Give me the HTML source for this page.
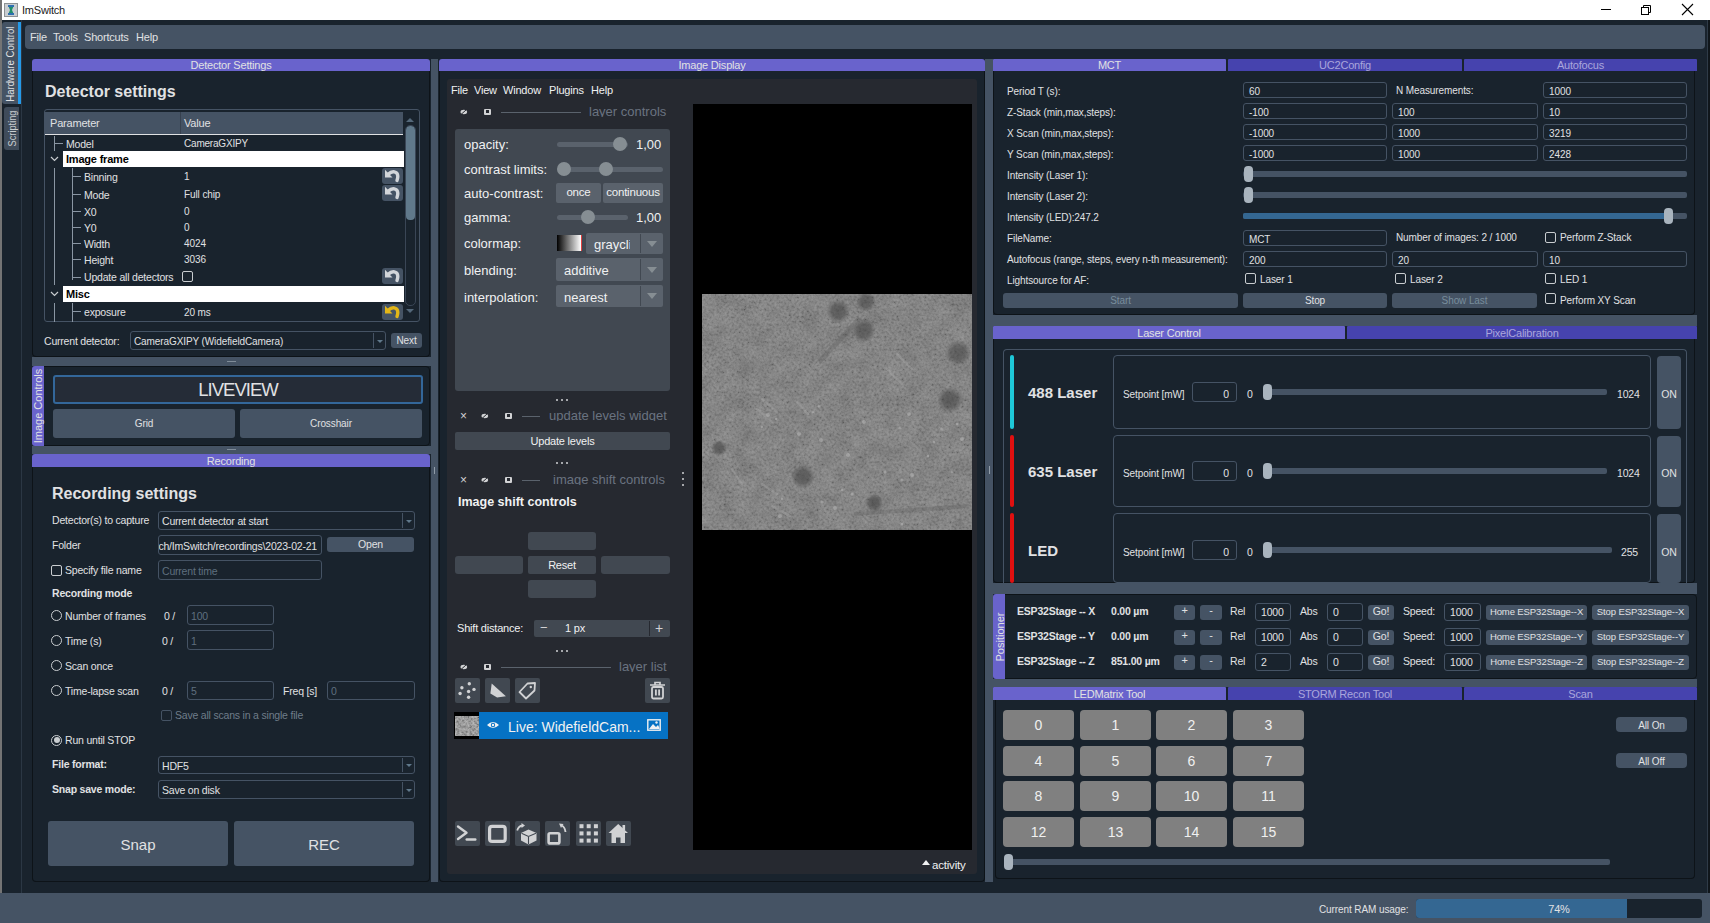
<!DOCTYPE html>
<html><head><meta charset="utf-8"><title>ImSwitch</title>
<style>
html,body{margin:0;padding:0;}
body{width:1710px;height:923px;overflow:hidden;position:relative;background:#19232D;font-family:"Liberation Sans",sans-serif;}
.a{position:absolute;}
.t{position:absolute;white-space:pre;}
</style></head><body>
<div class="a" style="left:0px;top:0px;width:1710px;height:20px;background:#FFFFFF;"></div>
<div class="a" style="left:0px;top:0px;width:2px;height:923px;background:#747474;"></div>
<div class="a" style="left:4px;top:3px;width:14px;height:14px;background:#c9cdd0;border:1px solid #8d9295;box-sizing:border-box;"></div>
<svg class="a" style="left:4px;top:3px;" width="14" height="14" viewBox="0 0 14 14"><path d="M4 2 L10 2 L8 7 L10 12 L4 12 L6 7 Z" fill="#1f8f6a"/><rect x="4" y="2" width="6" height="2" fill="#2e6fb0"/><rect x="4" y="10" width="6" height="2" fill="#2e6fb0"/></svg>
<div class="t" style="left:22px;top:4.69px;font-size:11px;line-height:11px;color:#1a1a1a;font-weight:400;letter-spacing:-0.2px;">ImSwitch</div>
<div class="a" style="left:1601px;top:9px;width:10px;height:1px;background:#000;"></div>
<svg class="a" style="left:1640px;top:4px;" width="12" height="12" viewBox="0 0 12 12"><rect x="1.5" y="3.5" width="7" height="7" fill="none" stroke="#000"/><path d="M3.5 3.5 V1.5 H10.5 V8.5 H8.5" fill="none" stroke="#000"/></svg>
<svg class="a" style="left:1681px;top:3px;" width="13" height="13" viewBox="0 0 13 13"><path d="M1 1 L12 12 M12 1 L1 12" stroke="#000" stroke-width="1.1"/></svg>
<div class="a" style="left:21px;top:20px;width:1px;height:873px;background:#2b3744;"></div>
<div class="a" style="left:2px;top:22px;width:16px;height:82px;background:#455364;border-radius:3px 0 0 3px;"></div>
<div class="a" style="left:18px;top:22px;width:3px;height:82px;background:#259AE9;"></div>
<div class="t" style="left:-31.0px;top:57.5px;width:82.0px;height:16px;line-height:16px;text-align:center;font-size:11px;color:#E0E1E3;transform:rotate(-90deg) scaleX(0.87);">Hardware Control</div>
<div class="a" style="left:4px;top:107px;width:15px;height:43px;background:#3f4b5a;border-radius:3px 0 0 3px;"></div>
<div class="t" style="left:-9.0px;top:121.0px;width:43px;height:15px;line-height:15px;text-align:center;font-size:11px;color:#C9CDD0;transform:rotate(-90deg) scaleX(0.84);">Scripting</div>
<div class="a" style="left:25px;top:25px;width:1680px;height:24px;background:#455364;border-radius:4px;"></div>
<div class="t" style="left:30px;top:31.69px;font-size:11px;line-height:11px;color:#E0E1E3;font-weight:400;letter-spacing:-0.2px;">File</div>
<div class="t" style="left:53px;top:31.69px;font-size:11px;line-height:11px;color:#E0E1E3;font-weight:400;letter-spacing:-0.2px;">Tools</div>
<div class="t" style="left:84px;top:31.69px;font-size:11px;line-height:11px;color:#E0E1E3;font-weight:400;letter-spacing:-0.2px;">Shortcuts</div>
<div class="t" style="left:136px;top:31.69px;font-size:11px;line-height:11px;color:#E0E1E3;font-weight:400;letter-spacing:-0.2px;">Help</div>
<div class="a" style="left:431px;top:59px;width:7px;height:823px;background:#455364;"></div>
<div class="a" style="left:985px;top:59px;width:8px;height:823px;background:#455364;"></div>
<div class="a" style="left:1707px;top:20px;width:1px;height:873px;background:#2f3b48;"></div>
<div class="a" style="left:1708px;top:20px;width:2px;height:873px;background:#10161b;"></div>
<div class="a" style="left:32px;top:357px;width:406px;height:9px;background:#455364;"></div>
<div class="a" style="left:32px;top:446px;width:406px;height:8px;background:#455364;"></div>
<div class="a" style="left:227px;top:361px;width:9px;height:1px;background:#7f8c99;"></div>
<div class="a" style="left:227px;top:449px;width:9px;height:1px;background:#7f8c99;"></div>
<div class="a" style="left:434px;top:467px;width:1px;height:7px;background:#8f9ba7;"></div>
<div class="a" style="left:988.5px;top:466px;width:1.0px;height:8px;background:#8f9ba7;"></div>
<div class="a" style="left:1341px;top:321px;width:8px;height:1px;background:#8f9ba7;"></div>
<div class="a" style="left:1341px;top:589px;width:8px;height:1px;background:#8f9ba7;"></div>
<div class="a" style="left:1341px;top:683px;width:8px;height:1px;background:#8f9ba7;"></div>
<div class="a" style="left:993px;top:315px;width:704px;height:11px;background:#455364;"></div>
<div class="a" style="left:993px;top:583px;width:704px;height:11px;background:#455364;"></div>
<div class="a" style="left:993px;top:679px;width:704px;height:8px;background:#455364;"></div>
<div class="a" style="left:0px;top:893px;width:1710px;height:30px;background:#455364;"></div>
<div class="t" style="left:1319px;top:904.53px;font-size:10px;line-height:10px;color:#E0E1E3;font-weight:400;letter-spacing:-0.1px;">Current RAM usage:</div>
<div class="a" style="left:1416px;top:899px;width:286px;height:19px;background:#19232D;border-radius:3px;"></div>
<div class="a" style="left:1416px;top:899px;width:211px;height:19px;background:#346792;border-radius:3px 0 0 3px;"></div>
<div class="t" style="left:1416px;width:286px;text-align:center;top:903.69px;font-size:11px;line-height:11px;color:#E0E1E3;font-weight:400;letter-spacing:-0.2px;">74%</div>
<div class="a" style="left:32px;top:59px;width:398px;height:12px;background:#6963CC;border-radius:3px 3px 0 0;"></div>
<div class="t" style="left:32px;width:398px;text-align:center;top:59.69px;font-size:11px;line-height:11px;color:#E0E1E3;font-weight:400;letter-spacing:-0.2px;">Detector Settings</div>
<div class="a" style="left:32px;top:71px;width:398px;height:286px;background:#19232D;border:1px solid #0d1318;border-top:none;box-sizing:border-box;border-radius:0 0 4px 4px;"></div>
<div class="t" style="left:45px;top:83.76px;font-size:16px;line-height:16px;color:#E0E1E3;font-weight:700;letter-spacing:0;">Detector settings</div>
<div class="a" style="left:44px;top:109px;width:376px;height:213px;border:1px solid #455364;border-radius:3px;box-sizing:border-box;"></div>
<div class="a" style="left:45px;top:112px;width:358px;height:22px;background:#455364;"></div>
<div class="a" style="left:45px;top:134px;width:358px;height:1px;background:#E0E1E3;"></div>
<div class="a" style="left:180px;top:112px;width:1px;height:22px;background:#37414F;"></div>
<div class="t" style="left:50px;top:117.69px;font-size:11px;line-height:11px;color:#E0E1E3;font-weight:400;letter-spacing:-0.2px;">Parameter</div>
<div class="t" style="left:184px;top:117.69px;font-size:11px;line-height:11px;color:#E0E1E3;font-weight:400;letter-spacing:-0.2px;">Value</div>
<div class="a" style="left:406px;top:126px;width:9px;height:94px;background:#60798B;border-radius:4px;"></div>
<div class="a" style="left:404.5px;top:125px;width:11.0px;height:181px;border:1px solid #3a4656;border-radius:5px;box-sizing:border-box;"></div>
<div class="a" style="left:405.5px;top:118px;width:0;height:0;border-left:4.5px solid transparent;border-right:4.5px solid transparent;border-bottom:4px solid #54687A;"></div>
<div class="a" style="left:406px;top:309px;width:0;height:0;border-left:4.5px solid transparent;border-right:4.5px solid transparent;border-top:4px solid #54687A;"></div>
<div class="a" style="left:54px;top:136px;width:1px;height:15px;background:#8a96a3;"></div>
<div class="a" style="left:55px;top:143px;width:8px;height:1px;background:#8a96a3;"></div>
<div class="a" style="left:54px;top:168px;width:1px;height:117px;background:#8a96a3;"></div>
<div class="a" style="left:54px;top:303px;width:1px;height:19px;background:#8a96a3;"></div>
<div class="a" style="left:72px;top:168px;width:1px;height:112px;background:#8a96a3;"></div>
<div class="a" style="left:73px;top:176px;width:8px;height:1px;background:#8a96a3;"></div>
<div class="a" style="left:73px;top:194px;width:8px;height:1px;background:#8a96a3;"></div>
<div class="a" style="left:73px;top:211px;width:8px;height:1px;background:#8a96a3;"></div>
<div class="a" style="left:73px;top:227px;width:8px;height:1px;background:#8a96a3;"></div>
<div class="a" style="left:73px;top:243px;width:8px;height:1px;background:#8a96a3;"></div>
<div class="a" style="left:73px;top:259px;width:8px;height:1px;background:#8a96a3;"></div>
<div class="a" style="left:73px;top:277px;width:8px;height:1px;background:#8a96a3;"></div>
<div class="a" style="left:72px;top:303px;width:1px;height:19px;background:#8a96a3;"></div>
<div class="a" style="left:73px;top:311px;width:8px;height:1px;background:#8a96a3;"></div>
<svg class="a" style="left:50px;top:156px;" width="9" height="6" viewBox="0 0 9 6"><path d="M1 1 L4.5 4.5 L8 1" fill="none" stroke="#C9CDD0" stroke-width="1.2"/></svg>
<svg class="a" style="left:50px;top:291px;" width="9" height="6" viewBox="0 0 9 6"><path d="M1 1 L4.5 4.5 L8 1" fill="none" stroke="#C9CDD0" stroke-width="1.2"/></svg>
<div class="t" style="left:66px;top:138.71px;font-size:10.5px;line-height:10.5px;color:#E0E1E3;font-weight:400;letter-spacing:-0.2px;">Model</div>
<div class="t" style="left:184px;top:138.29px;font-size:11px;line-height:11px;color:#E0E1E3;font-weight:400;letter-spacing:-0.2px;font-size:10px;">CameraGXIPY</div>
<div class="a" style="left:63px;top:151px;width:341px;height:16px;background:#FFFFFF;"></div>
<div class="t" style="left:66px;top:154.19px;font-size:11px;line-height:11px;color:#000;font-weight:700;letter-spacing:-0.2px;">Image frame</div>
<div class="t" style="left:84px;top:171.61px;font-size:10.5px;line-height:10.5px;color:#E0E1E3;font-weight:400;letter-spacing:-0.2px;">Binning</div>
<div class="t" style="left:184px;top:172.03px;font-size:10px;line-height:10px;color:#E0E1E3;font-weight:400;letter-spacing:-0.1px;">1</div>
<div class="t" style="left:84px;top:189.61px;font-size:10.5px;line-height:10.5px;color:#E0E1E3;font-weight:400;letter-spacing:-0.2px;">Mode</div>
<div class="t" style="left:184px;top:190.03px;font-size:10px;line-height:10px;color:#E0E1E3;font-weight:400;letter-spacing:-0.1px;">Full chip</div>
<div class="t" style="left:84px;top:206.61px;font-size:10.5px;line-height:10.5px;color:#E0E1E3;font-weight:400;letter-spacing:-0.2px;">X0</div>
<div class="t" style="left:184px;top:207.03px;font-size:10px;line-height:10px;color:#E0E1E3;font-weight:400;letter-spacing:-0.1px;">0</div>
<div class="t" style="left:84px;top:222.61px;font-size:10.5px;line-height:10.5px;color:#E0E1E3;font-weight:400;letter-spacing:-0.2px;">Y0</div>
<div class="t" style="left:184px;top:223.03px;font-size:10px;line-height:10px;color:#E0E1E3;font-weight:400;letter-spacing:-0.1px;">0</div>
<div class="t" style="left:84px;top:238.61px;font-size:10.5px;line-height:10.5px;color:#E0E1E3;font-weight:400;letter-spacing:-0.2px;">Width</div>
<div class="t" style="left:184px;top:239.03px;font-size:10px;line-height:10px;color:#E0E1E3;font-weight:400;letter-spacing:-0.1px;">4024</div>
<div class="t" style="left:84px;top:254.61px;font-size:10.5px;line-height:10.5px;color:#E0E1E3;font-weight:400;letter-spacing:-0.2px;">Height</div>
<div class="t" style="left:184px;top:255.03px;font-size:10px;line-height:10px;color:#E0E1E3;font-weight:400;letter-spacing:-0.1px;">3036</div>
<div class="t" style="left:84px;top:272.11px;font-size:10.5px;line-height:10.5px;color:#E0E1E3;font-weight:400;letter-spacing:-0.2px;">Update all detectors</div>
<div class="a" style="left:182px;top:271px;width:11px;height:11px;border:1px solid #C9CDD0;border-radius:2px;box-sizing:border-box;"></div>
<div class="a" style="left:63px;top:286px;width:341px;height:16px;background:#FFFFFF;"></div>
<div class="t" style="left:66px;top:289.19px;font-size:11px;line-height:11px;color:#000;font-weight:700;letter-spacing:-0.2px;">Misc</div>
<div class="t" style="left:84px;top:307.11px;font-size:10.5px;line-height:10.5px;color:#E0E1E3;font-weight:400;letter-spacing:-0.2px;">exposure</div>
<div class="t" style="left:184px;top:307.54px;font-size:10px;line-height:10px;color:#E0E1E3;font-weight:400;letter-spacing:-0.1px;">20 ms</div>
<div class="a" style="left:382px;top:168px;width:21px;height:16px;background:#455364;border-radius:3px;"></div>
<svg class="a" style="left:385px;top:169px;" width="16" height="14" viewBox="0 0 16 14"><path d="M3.5 5 C 7 1.5, 12.5 2, 12.8 7 C 12.9 8.5, 12.5 10, 12 11.5" fill="none" stroke="#d3d6da" stroke-width="3.4" stroke-linecap="round"/><path d="M0 0.8 L0 8.5 L7.5 8.5 Z" fill="#d3d6da"/></svg>
<div class="a" style="left:382px;top:184.5px;width:21px;height:16.0px;background:#455364;border-radius:3px;"></div>
<svg class="a" style="left:385px;top:185.5px;" width="16" height="14" viewBox="0 0 16 14"><path d="M3.5 5 C 7 1.5, 12.5 2, 12.8 7 C 12.9 8.5, 12.5 10, 12 11.5" fill="none" stroke="#d3d6da" stroke-width="3.4" stroke-linecap="round"/><path d="M0 0.8 L0 8.5 L7.5 8.5 Z" fill="#d3d6da"/></svg>
<div class="a" style="left:382px;top:268px;width:21px;height:16px;background:#455364;border-radius:3px;"></div>
<svg class="a" style="left:385px;top:269px;" width="16" height="14" viewBox="0 0 16 14"><path d="M3.5 5 C 7 1.5, 12.5 2, 12.8 7 C 12.9 8.5, 12.5 10, 12 11.5" fill="none" stroke="#d3d6da" stroke-width="3.4" stroke-linecap="round"/><path d="M0 0.8 L0 8.5 L7.5 8.5 Z" fill="#d3d6da"/></svg>
<div class="a" style="left:382px;top:303.5px;width:21px;height:16.0px;background:#455364;border-radius:3px;"></div>
<svg class="a" style="left:385px;top:304.5px;" width="16" height="14" viewBox="0 0 16 14"><path d="M3.5 5 C 7 1.5, 12.5 2, 12.8 7 C 12.9 8.5, 12.5 10, 12 11.5" fill="none" stroke="#e3b617" stroke-width="3.4" stroke-linecap="round"/><path d="M0 0.8 L0 8.5 L7.5 8.5 Z" fill="#e3b617"/></svg>
<div class="t" style="left:44px;top:335.69px;font-size:11px;line-height:11px;color:#E0E1E3;font-weight:400;letter-spacing:-0.2px;font-size:10.5px;">Current detector:</div>
<div class="a" style="left:130px;top:331px;width:256px;height:19px;background:#19232D;border:1px solid #455364;border-radius:3px;box-sizing:border-box;"></div>
<div class="a" style="left:131px;top:331px;width:250px;height:19px;overflow:hidden;direction:ltr;"><div class="t" style="left:0px;padding-left:3px;top:5.64px;font-size:10px;line-height:10px;color:#E0E1E3;letter-spacing:-0.1px;">CameraGXIPY (WidefieldCamera)</div></div>
<div class="a" style="left:373px;top:333px;width:1px;height:15px;background:#455364;"></div>
<div class="a" style="left:376.5px;top:339.5px;width:0;height:0;border-left:3px solid transparent;border-right:3px solid transparent;border-top:3px solid #60798B;"></div>
<div class="a" style="left:391px;top:333px;width:31px;height:15px;background:#455364;border-radius:3px;"></div>
<div class="t" style="left:391px;width:31px;text-align:center;top:335.64px;font-size:10px;line-height:10px;color:#E0E1E3;font-weight:400;letter-spacing:-0.1px;">Next</div>
<div class="a" style="left:32px;top:366px;width:398px;height:80px;background:#19232D;border:1px solid #0d1318;box-sizing:border-box;border-radius:4px;"></div>
<div class="a" style="left:32px;top:366px;width:12px;height:80px;background:#6963CC;border-radius:3px 0 0 3px;"></div>
<div class="t" style="left:-2.0px;top:400.0px;width:80px;height:12px;line-height:12px;text-align:center;font-size:11px;color:#E0E1E3;transform:rotate(-90deg) scaleX(1.0);">Image Controls</div>
<div class="a" style="left:53px;top:375px;width:370px;height:29px;background:#252c37;border:2px solid #33679a;border-radius:3px;box-sizing:border-box;"></div>
<div class="t" style="left:53px;width:370px;text-align:center;top:380.84px;font-size:18.5px;line-height:18.5px;color:#E0E1E3;font-weight:400;letter-spacing:0;letter-spacing:-1px;">LIVEVIEW</div>
<div class="a" style="left:53px;top:409px;width:182px;height:29px;background:#455364;border-radius:3px;"></div>
<div class="t" style="left:53px;width:182px;text-align:center;top:419.04px;font-size:10px;line-height:10px;color:#E0E1E3;font-weight:400;letter-spacing:-0.1px;">Grid</div>
<div class="a" style="left:240px;top:409px;width:182px;height:29px;background:#455364;border-radius:3px;"></div>
<div class="t" style="left:240px;width:182px;text-align:center;top:419.04px;font-size:10px;line-height:10px;color:#E0E1E3;font-weight:400;letter-spacing:-0.1px;">Crosshair</div>
<div class="a" style="left:32px;top:454px;width:398px;height:13px;background:#6963CC;border-radius:3px 3px 0 0;"></div>
<div class="t" style="left:32px;width:398px;text-align:center;top:455.69px;font-size:11px;line-height:11px;color:#E0E1E3;font-weight:400;letter-spacing:-0.2px;">Recording</div>
<div class="a" style="left:32px;top:467px;width:398px;height:415px;background:#19232D;border:1px solid #0d1318;border-top:none;box-sizing:border-box;border-radius:0 0 4px 4px;"></div>
<div class="t" style="left:52px;top:485.86px;font-size:16px;line-height:16px;color:#E0E1E3;font-weight:700;letter-spacing:0;">Recording settings</div>
<div class="t" style="left:52px;top:515.11px;font-size:10.5px;line-height:10.5px;color:#E0E1E3;font-weight:400;letter-spacing:-0.2px;">Detector(s) to capture</div>
<div class="a" style="left:158px;top:511px;width:257px;height:19px;background:#19232D;border:1px solid #455364;border-radius:3px;box-sizing:border-box;"></div>
<div class="a" style="left:159px;top:511px;width:251px;height:19px;overflow:hidden;direction:ltr;"><div class="t" style="left:0px;padding-left:3px;top:5.39px;font-size:10.5px;line-height:10.5px;color:#E0E1E3;letter-spacing:-0.2px;">Current detector at start</div></div>
<div class="a" style="left:402px;top:513px;width:1px;height:15px;background:#455364;"></div>
<div class="a" style="left:405.5px;top:519.5px;width:0;height:0;border-left:3px solid transparent;border-right:3px solid transparent;border-top:3px solid #60798B;"></div>
<div class="t" style="left:52px;top:539.61px;font-size:10.5px;line-height:10.5px;color:#E0E1E3;font-weight:400;letter-spacing:-0.2px;">Folder</div>
<div class="a" style="left:158px;top:535px;width:164px;height:20px;background:#19232D;border:1px solid #455364;border-radius:3px;box-sizing:border-box;"></div>
<div class="a" style="left:159px;top:535px;width:158px;height:20px;overflow:hidden;direction:ltr;"><div class="t" style="right:0px;padding-left:3px;top:5.89px;font-size:10.5px;line-height:10.5px;color:#E0E1E3;letter-spacing:-0.2px;">ch/ImSwitch/recordings\2023-02-21</div></div>
<div class="a" style="left:327px;top:537px;width:87px;height:15px;background:#455364;border-radius:3px;"></div>
<div class="t" style="left:327px;width:87px;text-align:center;top:539.39px;font-size:10.5px;line-height:10.5px;color:#E0E1E3;font-weight:400;letter-spacing:-0.2px;">Open</div>
<div class="a" style="left:51px;top:565px;width:11px;height:11px;border:1px solid #C9CDD0;border-radius:2px;box-sizing:border-box;"></div>
<div class="t" style="left:65px;top:564.61px;font-size:10.5px;line-height:10.5px;color:#E0E1E3;font-weight:400;letter-spacing:-0.2px;">Specify file name</div>
<div class="a" style="left:158px;top:560px;width:164px;height:20px;background:#19232D;border:1px solid #455364;border-radius:3px;box-sizing:border-box;"></div>
<div class="a" style="left:159px;top:560px;width:158px;height:20px;overflow:hidden;direction:ltr;"><div class="t" style="left:0px;padding-left:3px;top:5.89px;font-size:10.5px;line-height:10.5px;color:#5f6f7f;letter-spacing:-0.2px;">Current time</div></div>
<div class="t" style="left:52px;top:588.11px;font-size:10.5px;line-height:10.5px;color:#E0E1E3;font-weight:700;letter-spacing:-0.2px;">Recording mode</div>
<div class="a" style="left:51px;top:610px;width:11px;height:11px;border:1px solid #C9CDD0;border-radius:50%;box-sizing:border-box;"></div>
<div class="t" style="left:65px;top:611.11px;font-size:10.5px;line-height:10.5px;color:#E0E1E3;font-weight:400;letter-spacing:-0.2px;">Number of frames</div>
<div class="t" style="left:164px;top:611.11px;font-size:10.5px;line-height:10.5px;color:#E0E1E3;font-weight:400;letter-spacing:-0.2px;">0 /</div>
<div class="a" style="left:187px;top:605px;width:87px;height:20px;background:#19232D;border:1px solid #455364;border-radius:3px;box-sizing:border-box;"></div>
<div class="a" style="left:188px;top:605px;width:81px;height:20px;overflow:hidden;direction:ltr;"><div class="t" style="left:0px;padding-left:3px;top:5.89px;font-size:10.5px;line-height:10.5px;color:#5f6f7f;letter-spacing:-0.2px;">100</div></div>
<div class="a" style="left:51px;top:635px;width:11px;height:11px;border:1px solid #C9CDD0;border-radius:50%;box-sizing:border-box;"></div>
<div class="t" style="left:65px;top:636.11px;font-size:10.5px;line-height:10.5px;color:#E0E1E3;font-weight:400;letter-spacing:-0.2px;">Time (s)</div>
<div class="t" style="left:162px;top:636.11px;font-size:10.5px;line-height:10.5px;color:#E0E1E3;font-weight:400;letter-spacing:-0.2px;">0 /</div>
<div class="a" style="left:187px;top:630px;width:87px;height:20px;background:#19232D;border:1px solid #455364;border-radius:3px;box-sizing:border-box;"></div>
<div class="a" style="left:188px;top:630px;width:81px;height:20px;overflow:hidden;direction:ltr;"><div class="t" style="left:0px;padding-left:3px;top:5.89px;font-size:10.5px;line-height:10.5px;color:#5f6f7f;letter-spacing:-0.2px;">1</div></div>
<div class="a" style="left:51px;top:660px;width:11px;height:11px;border:1px solid #C9CDD0;border-radius:50%;box-sizing:border-box;"></div>
<div class="t" style="left:65px;top:660.61px;font-size:10.5px;line-height:10.5px;color:#E0E1E3;font-weight:400;letter-spacing:-0.2px;">Scan once</div>
<div class="a" style="left:51px;top:685px;width:11px;height:11px;border:1px solid #C9CDD0;border-radius:50%;box-sizing:border-box;"></div>
<div class="t" style="left:65px;top:685.61px;font-size:10.5px;line-height:10.5px;color:#E0E1E3;font-weight:400;letter-spacing:-0.2px;">Time-lapse scan</div>
<div class="t" style="left:162px;top:685.61px;font-size:10.5px;line-height:10.5px;color:#E0E1E3;font-weight:400;letter-spacing:-0.2px;">0 /</div>
<div class="a" style="left:187px;top:681px;width:87px;height:19px;background:#19232D;border:1px solid #455364;border-radius:3px;box-sizing:border-box;"></div>
<div class="a" style="left:188px;top:681px;width:81px;height:19px;overflow:hidden;direction:ltr;"><div class="t" style="left:0px;padding-left:3px;top:5.39px;font-size:10.5px;line-height:10.5px;color:#5f6f7f;letter-spacing:-0.2px;">5</div></div>
<div class="t" style="left:283px;top:685.61px;font-size:10.5px;line-height:10.5px;color:#E0E1E3;font-weight:400;letter-spacing:-0.2px;">Freq [s]</div>
<div class="a" style="left:327px;top:681px;width:88px;height:19px;background:#19232D;border:1px solid #455364;border-radius:3px;box-sizing:border-box;"></div>
<div class="a" style="left:328px;top:681px;width:82px;height:19px;overflow:hidden;direction:ltr;"><div class="t" style="left:0px;padding-left:3px;top:5.39px;font-size:10.5px;line-height:10.5px;color:#5f6f7f;letter-spacing:-0.2px;">0</div></div>
<div class="a" style="left:161px;top:710px;width:11px;height:11px;border:1px solid #455364;border-radius:2px;box-sizing:border-box;"></div>
<div class="t" style="left:175px;top:710.11px;font-size:10.5px;line-height:10.5px;color:#6f7d8a;font-weight:400;letter-spacing:-0.2px;">Save all scans in a single file</div>
<div class="a" style="left:51px;top:734.5px;width:11px;height:11.0px;border:1px solid #C9CDD0;border-radius:50%;box-sizing:border-box;"></div>
<div class="a" style="left:53.5px;top:737.0px;width:6.0px;height:6.0px;background:#C9CDD0;border-radius:50%;"></div>
<div class="t" style="left:65px;top:735.11px;font-size:10.5px;line-height:10.5px;color:#E0E1E3;font-weight:400;letter-spacing:-0.2px;">Run until STOP</div>
<div class="t" style="left:52px;top:759.11px;font-size:10.5px;line-height:10.5px;color:#E0E1E3;font-weight:700;letter-spacing:-0.2px;">File format:</div>
<div class="a" style="left:158px;top:756px;width:257px;height:18px;background:#19232D;border:1px solid #455364;border-radius:3px;box-sizing:border-box;"></div>
<div class="a" style="left:159px;top:756px;width:251px;height:18px;overflow:hidden;direction:ltr;"><div class="t" style="left:0px;padding-left:3px;top:4.89px;font-size:10.5px;line-height:10.5px;color:#E0E1E3;letter-spacing:-0.2px;">HDF5</div></div>
<div class="a" style="left:402px;top:758px;width:1px;height:14px;background:#455364;"></div>
<div class="a" style="left:405.5px;top:764.0px;width:0;height:0;border-left:3px solid transparent;border-right:3px solid transparent;border-top:3px solid #60798B;"></div>
<div class="t" style="left:52px;top:784.11px;font-size:10.5px;line-height:10.5px;color:#E0E1E3;font-weight:700;letter-spacing:-0.2px;">Snap save mode:</div>
<div class="a" style="left:158px;top:780px;width:257px;height:19px;background:#19232D;border:1px solid #455364;border-radius:3px;box-sizing:border-box;"></div>
<div class="a" style="left:159px;top:780px;width:251px;height:19px;overflow:hidden;direction:ltr;"><div class="t" style="left:0px;padding-left:3px;top:5.39px;font-size:10.5px;line-height:10.5px;color:#E0E1E3;letter-spacing:-0.2px;">Save on disk</div></div>
<div class="a" style="left:402px;top:782px;width:1px;height:15px;background:#455364;"></div>
<div class="a" style="left:405.5px;top:788.5px;width:0;height:0;border-left:3px solid transparent;border-right:3px solid transparent;border-top:3px solid #60798B;"></div>
<div class="a" style="left:48px;top:821px;width:180px;height:45px;background:#455364;border-radius:3px;"></div>
<div class="t" style="left:48px;width:180px;text-align:center;top:837.30px;font-size:15px;line-height:15px;color:#E0E1E3;font-weight:400;letter-spacing:0;">Snap</div>
<div class="a" style="left:234px;top:821px;width:180px;height:45px;background:#455364;border-radius:3px;"></div>
<div class="t" style="left:234px;width:180px;text-align:center;top:837.30px;font-size:15px;line-height:15px;color:#E0E1E3;font-weight:400;letter-spacing:0;">REC</div>
<div class="a" style="left:439px;top:59px;width:546px;height:12px;background:#6963CC;border-radius:3px 3px 0 0;"></div>
<div class="t" style="left:439px;width:546px;text-align:center;top:59.69px;font-size:11px;line-height:11px;color:#E0E1E3;font-weight:400;letter-spacing:-0.2px;">Image Display</div>
<div class="a" style="left:439px;top:71px;width:546px;height:811px;background:#19232D;border:1px solid #0d1318;border-top:none;box-sizing:border-box;border-radius:0 0 4px 4px;"></div>
<div class="a" style="left:447px;top:79px;width:530px;height:795px;background:#262930;border-radius:3px;"></div>
<div class="t" style="left:451px;top:84.69px;font-size:11px;line-height:11px;color:#F0F1F2;font-weight:400;letter-spacing:-0.2px;">File</div>
<div class="t" style="left:474px;top:84.69px;font-size:11px;line-height:11px;color:#F0F1F2;font-weight:400;letter-spacing:-0.2px;">View</div>
<div class="t" style="left:503px;top:84.69px;font-size:11px;line-height:11px;color:#F0F1F2;font-weight:400;letter-spacing:-0.2px;">Window</div>
<div class="t" style="left:549px;top:84.69px;font-size:11px;line-height:11px;color:#F0F1F2;font-weight:400;letter-spacing:-0.2px;">Plugins</div>
<div class="t" style="left:591px;top:84.69px;font-size:11px;line-height:11px;color:#F0F1F2;font-weight:400;letter-spacing:-0.2px;">Help</div>
<svg class="a" style="left:460px;top:109px;" width="8" height="6" viewBox="0 0 8 6"><ellipse cx="3.8" cy="3" rx="3.3" ry="2.2" fill="#D1D2D4"/><path d="M1 5.5 L6.5 0.5" stroke="#262930" stroke-width="1"/></svg>
<svg class="a" style="left:484px;top:109px;" width="8" height="7" viewBox="0 0 8 7"><rect x="0" y="0" width="7" height="6" rx="1" fill="#D1D2D4"/><rect x="2" y="1" width="3" height="3" fill="#262930"/></svg>
<div class="a" style="left:501px;top:112px;width:80px;height:1px;background:#5A626C;"></div>
<div class="a" style="left:589px;top:100px;width:120px;height:17px;overflow:hidden;"><div class="t" style="left:0;top:5.00px;font-size:13px;line-height:13px;color:#6A7380;">layer controls</div></div>
<div class="a" style="left:455px;top:129px;width:215px;height:262px;background:#414851;border-radius:3px;"></div>
<div class="t" style="left:464px;top:138.00px;font-size:13px;line-height:13px;color:#F0F1F2;font-weight:400;letter-spacing:0;">opacity:</div>
<div class="a" style="left:557px;top:141.5px;width:71px;height:5.0px;background:#5A626C;border-radius:3px;"></div>
<div class="a" style="left:613px;top:137px;width:14px;height:14px;background:#868E93;border-radius:50%;"></div>
<div class="t" style="left:636px;top:138.00px;font-size:13px;line-height:13px;color:#F0F1F2;font-weight:400;letter-spacing:0;">1,00</div>
<div class="t" style="left:464px;top:162.50px;font-size:13px;line-height:13px;color:#F0F1F2;font-weight:400;letter-spacing:0;">contrast limits:</div>
<div class="a" style="left:557px;top:166.5px;width:106px;height:5.0px;background:#5A626C;border-radius:3px;"></div>
<div class="a" style="left:557px;top:162px;width:14px;height:14px;background:#868E93;border-radius:50%;"></div>
<div class="a" style="left:599px;top:162px;width:14px;height:14px;background:#868E93;border-radius:50%;"></div>
<div class="t" style="left:464px;top:187.00px;font-size:13px;line-height:13px;color:#F0F1F2;font-weight:400;letter-spacing:0;">auto-contrast:</div>
<div class="a" style="left:556px;top:183px;width:45px;height:20px;background:#5A626C;border-radius:2px;"></div>
<div class="t" style="left:556px;width:45px;text-align:center;top:187.27px;font-size:11.5px;line-height:11.5px;color:#F0F1F2;font-weight:400;letter-spacing:-0.2px;">once</div>
<div class="a" style="left:603px;top:183px;width:60px;height:20px;background:#5A626C;border-radius:2px;"></div>
<div class="t" style="left:603px;width:60px;text-align:center;top:187.27px;font-size:11.5px;line-height:11.5px;color:#F0F1F2;font-weight:400;letter-spacing:-0.2px;">continuous</div>
<div class="t" style="left:464px;top:211.00px;font-size:13px;line-height:13px;color:#F0F1F2;font-weight:400;letter-spacing:0;">gamma:</div>
<div class="a" style="left:557px;top:214.5px;width:71px;height:5.0px;background:#5A626C;border-radius:3px;"></div>
<div class="a" style="left:581px;top:210px;width:14px;height:14px;background:#868E93;border-radius:50%;"></div>
<div class="t" style="left:636px;top:211.00px;font-size:13px;line-height:13px;color:#F0F1F2;font-weight:400;letter-spacing:0;">1,00</div>
<div class="t" style="left:464px;top:236.50px;font-size:13px;line-height:13px;color:#F0F1F2;font-weight:400;letter-spacing:0;">colormap:</div>
<div class="a" style="left:557px;top:235px;width:24px;height:16px;background:linear-gradient(90deg,#000,#fff);border-right:1px solid #e04040;"></div>
<div class="a" style="left:586px;top:233px;width:77px;height:21px;background:#5A626C;border-radius:2px;"></div>
<div class="a" style="left:640px;top:234px;width:1px;height:19px;background:#414851;"></div>
<div class="a" style="left:646.5px;top:240.5px;width:0;height:0;border-left:5.5px solid transparent;border-right:5.5px solid transparent;border-top:6px solid #868E93;"></div>
<div class="t" style="left:594px;top:238.00px;font-size:13px;line-height:13px;color:#F0F1F2;font-weight:400;letter-spacing:0;">graycli</div>
<div class="a" style="left:630px;top:233px;width:10px;height:21px;background:#5A626C;"></div>
<div class="t" style="left:464px;top:263.50px;font-size:13px;line-height:13px;color:#F0F1F2;font-weight:400;letter-spacing:0;">blending:</div>
<div class="a" style="left:556px;top:258px;width:107px;height:23px;background:#5A626C;border-radius:2px;"></div>
<div class="a" style="left:640px;top:259px;width:1px;height:21px;background:#414851;"></div>
<div class="a" style="left:646.5px;top:266.5px;width:0;height:0;border-left:5.5px solid transparent;border-right:5.5px solid transparent;border-top:6px solid #868E93;"></div>
<div class="t" style="left:564px;top:264.00px;font-size:13px;line-height:13px;color:#F0F1F2;font-weight:400;letter-spacing:0;">additive</div>
<div class="t" style="left:464px;top:290.50px;font-size:13px;line-height:13px;color:#F0F1F2;font-weight:400;letter-spacing:0;">interpolation:</div>
<div class="a" style="left:556px;top:285px;width:107px;height:22px;background:#5A626C;border-radius:2px;"></div>
<div class="a" style="left:640px;top:286px;width:1px;height:20px;background:#414851;"></div>
<div class="a" style="left:646.5px;top:293.0px;width:0;height:0;border-left:5.5px solid transparent;border-right:5.5px solid transparent;border-top:6px solid #868E93;"></div>
<div class="t" style="left:564px;top:291.00px;font-size:13px;line-height:13px;color:#F0F1F2;font-weight:400;letter-spacing:0;">nearest</div>
<div class="a" style="left:555.6px;top:398.6px;width:2.7999999999999545px;height:2.7999999999999545px;background:#D1D2D4;border-radius:50%;"></div>
<div class="a" style="left:560.6px;top:398.6px;width:2.7999999999999545px;height:2.7999999999999545px;background:#D1D2D4;border-radius:50%;"></div>
<div class="a" style="left:565.6px;top:398.6px;width:2.7999999999999545px;height:2.7999999999999545px;background:#D1D2D4;border-radius:50%;"></div>
<div class="t" style="left:460px;top:409.84px;font-size:12px;line-height:12px;color:#D1D2D4;font-weight:400;letter-spacing:0;">×</div>
<svg class="a" style="left:481px;top:413px;" width="8" height="6" viewBox="0 0 8 6"><ellipse cx="3.8" cy="3" rx="3.3" ry="2.2" fill="#D1D2D4"/><path d="M1 5.5 L6.5 0.5" stroke="#262930" stroke-width="1"/></svg>
<svg class="a" style="left:505px;top:413px;" width="8" height="7" viewBox="0 0 8 7"><rect x="0" y="0" width="7" height="6" rx="1" fill="#D1D2D4"/><rect x="2" y="1" width="3" height="3" fill="#262930"/></svg>
<div class="a" style="left:522px;top:416px;width:18px;height:1px;background:#5A626C;"></div>
<div class="a" style="left:549px;top:404px;width:120px;height:17px;overflow:hidden;"><div class="t" style="left:0;top:5.00px;font-size:13px;line-height:13px;color:#6A7380;">update levels widget</div></div>
<div class="a" style="left:455px;top:432px;width:215px;height:18px;background:#414851;border-radius:2px;"></div>
<div class="t" style="left:455px;width:215px;text-align:center;top:435.69px;font-size:11px;line-height:11px;color:#F0F1F2;font-weight:400;letter-spacing:-0.2px;">Update levels</div>
<div class="a" style="left:555.6px;top:461.6px;width:2.7999999999999545px;height:2.7999999999999545px;background:#D1D2D4;border-radius:50%;"></div>
<div class="a" style="left:560.6px;top:461.6px;width:2.7999999999999545px;height:2.7999999999999545px;background:#D1D2D4;border-radius:50%;"></div>
<div class="a" style="left:565.6px;top:461.6px;width:2.7999999999999545px;height:2.7999999999999545px;background:#D1D2D4;border-radius:50%;"></div>
<div class="t" style="left:460px;top:473.84px;font-size:12px;line-height:12px;color:#D1D2D4;font-weight:400;letter-spacing:0;">×</div>
<svg class="a" style="left:481px;top:477px;" width="8" height="6" viewBox="0 0 8 6"><ellipse cx="3.8" cy="3" rx="3.3" ry="2.2" fill="#D1D2D4"/><path d="M1 5.5 L6.5 0.5" stroke="#262930" stroke-width="1"/></svg>
<svg class="a" style="left:505px;top:477px;" width="8" height="7" viewBox="0 0 8 7"><rect x="0" y="0" width="7" height="6" rx="1" fill="#D1D2D4"/><rect x="2" y="1" width="3" height="3" fill="#262930"/></svg>
<div class="a" style="left:522px;top:480px;width:18px;height:1px;background:#5A626C;"></div>
<div class="a" style="left:553px;top:468px;width:120px;height:17px;overflow:hidden;"><div class="t" style="left:0;top:5.00px;font-size:13px;line-height:13px;color:#6A7380;">image shift controls</div></div>
<div class="a" style="left:681.6px;top:471.6px;width:2.7999999999999545px;height:2.7999999999999545px;background:#D1D2D4;border-radius:50%;"></div>
<div class="a" style="left:681.6px;top:477.6px;width:2.7999999999999545px;height:2.7999999999999545px;background:#D1D2D4;border-radius:50%;"></div>
<div class="a" style="left:681.6px;top:483.6px;width:2.7999999999999545px;height:2.7999999999999545px;background:#D1D2D4;border-radius:50%;"></div>
<div class="t" style="left:458px;top:495.92px;font-size:12.5px;line-height:12.5px;color:#F0F1F2;font-weight:700;letter-spacing:0;">Image shift controls</div>
<div class="a" style="left:528px;top:532px;width:68px;height:18px;background:#414851;border-radius:3px;"></div>
<div class="a" style="left:455px;top:556px;width:68px;height:18px;background:#414851;border-radius:3px;"></div>
<div class="a" style="left:528px;top:556px;width:68px;height:18px;background:#414851;border-radius:2px;"></div>
<div class="t" style="left:528px;width:68px;text-align:center;top:559.69px;font-size:11px;line-height:11px;color:#F0F1F2;font-weight:400;letter-spacing:-0.2px;">Reset</div>
<div class="a" style="left:601px;top:556px;width:69px;height:18px;background:#414851;border-radius:3px;"></div>
<div class="a" style="left:528px;top:580px;width:68px;height:18px;background:#414851;border-radius:3px;"></div>
<div class="t" style="left:457px;top:622.69px;font-size:11px;line-height:11px;color:#F0F1F2;font-weight:400;letter-spacing:-0.2px;">Shift distance:</div>
<div class="a" style="left:534px;top:620px;width:136px;height:17px;background:#414851;border-radius:2px;"></div>
<div class="a" style="left:649px;top:621px;width:1px;height:15px;background:#262930;"></div>
<div class="t" style="left:540px;top:621.00px;font-size:13px;line-height:13px;color:#D1D2D4;font-weight:400;letter-spacing:0;">−</div>
<div class="t" style="left:565px;top:622.69px;font-size:11px;line-height:11px;color:#F0F1F2;font-weight:400;letter-spacing:-0.2px;">1 px</div>
<div class="t" style="left:655px;top:621.15px;font-size:14px;line-height:14px;color:#D1D2D4;font-weight:400;letter-spacing:0;">+</div>
<div class="a" style="left:555.6px;top:649.6px;width:2.7999999999999545px;height:2.7999999999999545px;background:#D1D2D4;border-radius:50%;"></div>
<div class="a" style="left:560.6px;top:649.6px;width:2.7999999999999545px;height:2.7999999999999545px;background:#D1D2D4;border-radius:50%;"></div>
<div class="a" style="left:565.6px;top:649.6px;width:2.7999999999999545px;height:2.7999999999999545px;background:#D1D2D4;border-radius:50%;"></div>
<svg class="a" style="left:460px;top:664px;" width="8" height="6" viewBox="0 0 8 6"><ellipse cx="3.8" cy="3" rx="3.3" ry="2.2" fill="#D1D2D4"/><path d="M1 5.5 L6.5 0.5" stroke="#262930" stroke-width="1"/></svg>
<svg class="a" style="left:484px;top:664px;" width="8" height="7" viewBox="0 0 8 7"><rect x="0" y="0" width="7" height="6" rx="1" fill="#D1D2D4"/><rect x="2" y="1" width="3" height="3" fill="#262930"/></svg>
<div class="a" style="left:501px;top:667px;width:110px;height:1px;background:#5A626C;"></div>
<div class="a" style="left:619px;top:655px;width:120px;height:17px;overflow:hidden;"><div class="t" style="left:0;top:5.00px;font-size:13px;line-height:13px;color:#6A7380;">layer list</div></div>
<div class="a" style="left:455px;top:678px;width:25px;height:25px;background:#414851;border-radius:2px;"></div>
<div class="a" style="left:485px;top:678px;width:25px;height:25px;background:#414851;border-radius:2px;"></div>
<div class="a" style="left:515px;top:678px;width:25px;height:25px;background:#414851;border-radius:2px;"></div>
<div class="a" style="left:645px;top:678px;width:25px;height:25px;background:#414851;border-radius:2px;"></div>
<svg class="a" style="left:455px;top:678px;" width="25" height="25" viewBox="0 0 25 25"><g fill="#D1D2D4"><circle cx="14.3" cy="5.8" r="1.7"/><circle cx="6.9" cy="9.8" r="1.7"/><circle cx="19" cy="11.4" r="1.7"/><circle cx="13.6" cy="13.5" r="1.7"/><circle cx="5.1" cy="15.5" r="1.7"/><circle cx="13.6" cy="19.2" r="1.7"/></g></svg>
<svg class="a" style="left:485px;top:678px;" width="25" height="25" viewBox="0 0 25 25"><path d="M6.7 5.4 L20.9 18.2 L12.1 19.5 L5.4 15.5 Z" fill="#D1D2D4"/></svg>
<svg class="a" style="left:515px;top:678px;" width="25" height="25" viewBox="0 0 25 25"><path d="M4.5 14 L12.5 5.5 L20 5 L19.5 12.5 L11 20.5 Z" fill="none" stroke="#D1D2D4" stroke-width="1.8" stroke-linejoin="round"/><circle cx="15.8" cy="9" r="1.2" fill="#D1D2D4"/></svg>
<svg class="a" style="left:645px;top:678px;" width="25" height="25" viewBox="0 0 25 25"><path d="M5 7 H20 M10 7 V4.5 H15 V7" stroke="#D1D2D4" stroke-width="1.7" fill="none"/><rect x="7" y="9" width="11" height="11.5" rx="1.5" fill="none" stroke="#D1D2D4" stroke-width="1.8"/><rect x="10" y="11.5" width="1.8" height="6" fill="#D1D2D4"/><rect x="13.2" y="11.5" width="1.8" height="6" fill="#D1D2D4"/></svg>
<div class="a" style="left:454px;top:712px;width:25px;height:27px;background:#000;"></div>
<svg class="a" style="left:455px;top:716px;" width="24" height="20" viewBox="0 0 24 20"><rect width="24" height="20" fill="#8a8a8a"/><rect width="24" height="20" filter="url(#nz)" opacity="0.5"/></svg>
<div class="a" style="left:479px;top:712px;width:189px;height:27px;background:#0672c4;"></div>
<svg class="a" style="left:486px;top:720px;" width="14" height="10" viewBox="0 0 14 10"><path d="M1 5 Q7 -1 13 5 Q7 11 1 5 Z" fill="#F0F1F2"/><circle cx="7" cy="5" r="2.2" fill="#0672c4"/><circle cx="7" cy="5" r="1.2" fill="#F0F1F2"/></svg>
<div class="t" style="left:508px;top:719.65px;font-size:14px;line-height:14px;color:#F0F1F2;font-weight:400;letter-spacing:0;">Live: WidefieldCam...</div>
<svg class="a" style="left:647px;top:719px;" width="14" height="12" viewBox="0 0 14 12"><rect x="0.8" y="0.8" width="12.4" height="10.4" fill="none" stroke="#F0F1F2" stroke-width="1.4"/><path d="M2 10 L6 5 L9 8 L11 6 L12.5 9 V10 Z" fill="#F0F1F2"/><circle cx="9.5" cy="3.5" r="1.2" fill="#F0F1F2"/></svg>
<div class="a" style="left:455px;top:821px;width:25px;height:25px;background:#414851;border-radius:2px;"></div>
<div class="a" style="left:485px;top:821px;width:25px;height:25px;background:#414851;border-radius:2px;"></div>
<div class="a" style="left:515px;top:821px;width:25px;height:25px;background:#414851;border-radius:2px;"></div>
<div class="a" style="left:545px;top:821px;width:25px;height:25px;background:#414851;border-radius:2px;"></div>
<div class="a" style="left:576px;top:821px;width:25px;height:25px;background:#414851;border-radius:2px;"></div>
<div class="a" style="left:606px;top:821px;width:25px;height:25px;background:#414851;border-radius:2px;"></div>
<svg class="a" style="left:455px;top:821px;" width="25" height="25" viewBox="0 0 25 25"><path d="M3 5.5 L11.5 11.8 L3 18" fill="none" stroke="#D1D2D4" stroke-width="2.4" stroke-linecap="round" stroke-linejoin="round"/><rect x="10.5" y="17.2" width="11" height="2.6" rx="1.2" fill="#D1D2D4"/></svg>
<svg class="a" style="left:485px;top:821px;" width="25" height="25" viewBox="0 0 25 25"><rect x="4.6" y="5.4" width="15.6" height="15" rx="2.5" fill="none" stroke="#D1D2D4" stroke-width="3.2"/></svg>
<svg class="a" style="left:515px;top:821px;" width="25" height="25" viewBox="0 0 25 25"><path d="M6 12 L13.5 8.5 L21.5 12 L21.5 19.5 L13.5 23.5 L6 19.5 Z" fill="#D1D2D4"/><path d="M6.5 12.2 L13.5 15.5 L21 12.2 M13.5 15.5 V23" stroke="#414851" stroke-width="1.1" fill="none"/><path d="M2.2 9.5 Q3.5 5 7.5 4.5" fill="none" stroke="#D1D2D4" stroke-width="1.8"/><path d="M6.5 2 L10 4.6 L6.6 7 Z" fill="#D1D2D4"/></svg>
<svg class="a" style="left:545px;top:821px;" width="25" height="25" viewBox="0 0 25 25"><rect x="3.6" y="12.2" width="10.8" height="10.2" rx="1.5" fill="none" stroke="#D1D2D4" stroke-width="2.6"/><path d="M20.5 11 Q20 6 16.5 4.5" fill="none" stroke="#D1D2D4" stroke-width="1.9"/><path d="M14 2.5 L18.5 3 L16 7 Z" fill="#D1D2D4"/></svg>
<svg class="a" style="left:576px;top:821px;" width="25" height="25" viewBox="0 0 25 25"><g fill="#D1D2D4"><rect x="3.5" y="3.2" width="4" height="4"/><rect x="3.5" y="10.4" width="4" height="4"/><rect x="3.5" y="17.6" width="4" height="4"/><rect x="10.7" y="3.2" width="4" height="4"/><rect x="10.7" y="10.4" width="4" height="4"/><rect x="10.7" y="17.6" width="4" height="4"/><rect x="17.9" y="3.2" width="4" height="4"/><rect x="17.9" y="10.4" width="4" height="4"/><rect x="17.9" y="17.6" width="4" height="4"/></g></svg>
<svg class="a" style="left:606px;top:821px;" width="25" height="25" viewBox="0 0 25 25"><path d="M12.2 3 L22 12 L19 12 L19 22 L14.5 22 L14.5 16.5 L10 16.5 L10 22 L5.5 22 L5.5 12 L2.5 12 Z" fill="#D1D2D4"/><rect x="16.5" y="4" width="2.6" height="5" fill="#D1D2D4"/></svg>
<div class="a" style="left:693px;top:104px;width:279px;height:746px;background:#000;"></div>
<svg class="a" style="left:702px;top:294px;" width="270" height="236" viewBox="0 0 270 236"><defs><filter id="nz" x="0" y="0" width="100%" height="100%"><feTurbulence type="fractalNoise" baseFrequency="0.4" numOctaves="2" seed="7"/><feColorMatrix type="matrix" values="1.3 0 0 0 -0.22  1.3 0 0 0 -0.22  1.3 0 0 0 -0.22  0 0 0 0 1"/></filter>
<filter id="nz2" x="0" y="0" width="100%" height="100%"><feTurbulence type="fractalNoise" baseFrequency="0.06" numOctaves="2" seed="11"/><feColorMatrix type="matrix" values="1 0 0 0 0  1 0 0 0 0  1 0 0 0 0  0 0 0 0 1"/></filter>
<radialGradient id="bl"><stop offset="0" stop-color="#3f3f3f" stop-opacity="0.6"/><stop offset="0.55" stop-color="#3f3f3f" stop-opacity="0.5"/><stop offset="1" stop-color="#3f3f3f" stop-opacity="0"/></radialGradient></defs>
<rect width="270" height="236" fill="#6c6c6c"/>
<rect width="270" height="236" filter="url(#nz2)" opacity="0.18"/>
<rect width="270" height="236" filter="url(#nz)" opacity="0.2"/>
<g fill="url(#bl)"><circle cx="136" cy="17.5" r="12"/><circle cx="162" cy="36.7" r="12"/><circle cx="256" cy="59" r="13"/><circle cx="248" cy="106" r="13"/><circle cx="101" cy="183" r="12"/><circle cx="172" cy="209" r="9"/><circle cx="164" cy="7.7" r="10"/><circle cx="17" cy="154" r="8"/></g>
<path d="M158 24 L117 68" stroke="#5a5a5a" stroke-width="5" opacity="0.3"/>
<path d="M152 220 L267 212" stroke="#5e5e5e" stroke-width="4" opacity="0.3"/>
<g fill="#b8b8b8" opacity="0.55"><circle cx="162" cy="128" r="2.0"/><circle cx="198" cy="134" r="1.6"/><circle cx="207" cy="120" r="2.0"/><circle cx="183" cy="178" r="1.6"/><circle cx="210" cy="181" r="2.0"/><circle cx="146" cy="161" r="2.0"/><circle cx="119" cy="146" r="2.0"/><circle cx="97" cy="140" r="2.0"/><circle cx="111" cy="118" r="1.3"/><circle cx="117" cy="112" r="1.6"/><circle cx="74" cy="125" r="1.3"/><circle cx="66" cy="121" r="2.0"/><circle cx="60" cy="133" r="1.3"/><circle cx="226" cy="162" r="1.3"/><circle cx="232" cy="148" r="1.3"/><circle cx="200" cy="186" r="1.6"/><circle cx="150" cy="200" r="1.6"/><circle cx="140" cy="196" r="1.3"/><circle cx="120" cy="208" r="1.6"/><circle cx="133" cy="214" r="2.0"/><circle cx="80" cy="205" r="1.3"/><circle cx="78" cy="222" r="2.0"/><circle cx="200" cy="230" r="1.3"/><circle cx="250" cy="178" r="1.3"/><circle cx="260" cy="145" r="2.0"/><circle cx="255" cy="130" r="1.3"/><circle cx="240" cy="135" r="1.6"/></g>
<g stroke="#acacac" stroke-width="2.2" stroke-linecap="round" opacity="0.35"><path d="M55 115 L70 128" /><path d="M60 105 L75 118" /><path d="M95 108 L106 120" /><path d="M60 190 L75 200" /><path d="M70 212 L88 222" /><path d="M30 175 L40 190" /><path d="M185 75 L200 90" /><path d="M195 60 L210 75" /></g>
</svg>
<div class="a" style="left:922px;top:860px;width:0;height:0;border-left:4.5px solid transparent;border-right:4.5px solid transparent;border-bottom:5px solid #F0F1F2;"></div>
<div class="t" style="left:932px;top:859.77px;font-size:11.5px;line-height:11.5px;color:#F0F1F2;font-weight:400;letter-spacing:-0.2px;">activity</div>
<div class="a" style="left:993px;top:59px;width:233px;height:12px;background:#6963CC;border-radius:1px 1px 0 0;"></div>
<div class="a" style="left:1228px;top:59px;width:234px;height:12px;background:#4643AE;border-radius:1px 1px 0 0;"></div>
<div class="a" style="left:1464px;top:59px;width:233px;height:12px;background:#4643AE;border-radius:1px 1px 0 0;"></div>
<div class="t" style="left:993px;width:233px;text-align:center;top:59.69px;font-size:11px;line-height:11px;color:#E0E1E3;font-weight:400;letter-spacing:-0.2px;">MCT</div>
<div class="t" style="left:1228px;width:234px;text-align:center;top:59.69px;font-size:11px;line-height:11px;color:#aaa6dc;font-weight:400;letter-spacing:-0.2px;">UC2Config</div>
<div class="t" style="left:1464px;width:233px;text-align:center;top:59.69px;font-size:11px;line-height:11px;color:#aaa6dc;font-weight:400;letter-spacing:-0.2px;">Autofocus</div>
<div class="a" style="left:993px;top:71px;width:702px;height:244px;background:#19232D;border:1px solid #0d1318;border-top:none;box-sizing:border-box;border-radius:0 0 4px 4px;"></div>
<div class="t" style="left:1007px;top:86.53px;font-size:10px;line-height:10px;color:#E0E1E3;font-weight:400;letter-spacing:-0.1px;">Period T (s):</div>
<div class="t" style="left:1007px;top:107.53px;font-size:10px;line-height:10px;color:#E0E1E3;font-weight:400;letter-spacing:-0.1px;">Z-Stack (min,max,steps):</div>
<div class="t" style="left:1007px;top:128.53px;font-size:10px;line-height:10px;color:#E0E1E3;font-weight:400;letter-spacing:-0.1px;">X Scan (min,max,steps):</div>
<div class="t" style="left:1007px;top:149.53px;font-size:10px;line-height:10px;color:#E0E1E3;font-weight:400;letter-spacing:-0.1px;">Y Scan (min,max,steps):</div>
<div class="t" style="left:1007px;top:170.53px;font-size:10px;line-height:10px;color:#E0E1E3;font-weight:400;letter-spacing:-0.1px;">Intensity (Laser 1):</div>
<div class="t" style="left:1007px;top:191.53px;font-size:10px;line-height:10px;color:#E0E1E3;font-weight:400;letter-spacing:-0.1px;">Intensity (Laser 2):</div>
<div class="t" style="left:1007px;top:212.53px;font-size:10px;line-height:10px;color:#E0E1E3;font-weight:400;letter-spacing:-0.1px;">Intensity (LED):247.2</div>
<div class="t" style="left:1007px;top:233.53px;font-size:10px;line-height:10px;color:#E0E1E3;font-weight:400;letter-spacing:-0.1px;">FileName:</div>
<div class="t" style="left:1007px;top:254.53px;font-size:10px;line-height:10px;color:#E0E1E3;font-weight:400;letter-spacing:-0.1px;">Autofocus (range, steps, every n-th measurement):</div>
<div class="t" style="left:1007px;top:275.54px;font-size:10px;line-height:10px;color:#E0E1E3;font-weight:400;letter-spacing:-0.1px;">Lightsource for AF:</div>
<div class="a" style="left:1243px;top:82px;width:144px;height:16px;background:#19232D;border:1px solid #455364;border-radius:3px;box-sizing:border-box;"></div>
<div class="a" style="left:1244px;top:82px;width:136px;height:16px;overflow:hidden;direction:ltr;"><div class="t" style="left:0px;padding-left:5px;top:4.53px;font-size:10px;line-height:10px;color:#E0E1E3;letter-spacing:-0.1px;">60</div></div>
<div class="t" style="left:1396px;top:86.44px;font-size:10px;line-height:10px;color:#E0E1E3;font-weight:400;letter-spacing:-0.1px;">N Measurements:</div>
<div class="a" style="left:1543px;top:82px;width:144px;height:16px;background:#19232D;border:1px solid #455364;border-radius:3px;box-sizing:border-box;"></div>
<div class="a" style="left:1544px;top:82px;width:136px;height:16px;overflow:hidden;direction:ltr;"><div class="t" style="left:0px;padding-left:5px;top:4.53px;font-size:10px;line-height:10px;color:#E0E1E3;letter-spacing:-0.1px;">1000</div></div>
<div class="a" style="left:1243px;top:103px;width:144px;height:16px;background:#19232D;border:1px solid #455364;border-radius:3px;box-sizing:border-box;"></div>
<div class="a" style="left:1244px;top:103px;width:136px;height:16px;overflow:hidden;direction:ltr;"><div class="t" style="left:0px;padding-left:5px;top:4.53px;font-size:10px;line-height:10px;color:#E0E1E3;letter-spacing:-0.1px;">-100</div></div>
<div class="a" style="left:1392px;top:103px;width:146px;height:16px;background:#19232D;border:1px solid #455364;border-radius:3px;box-sizing:border-box;"></div>
<div class="a" style="left:1393px;top:103px;width:138px;height:16px;overflow:hidden;direction:ltr;"><div class="t" style="left:0px;padding-left:5px;top:4.53px;font-size:10px;line-height:10px;color:#E0E1E3;letter-spacing:-0.1px;">100</div></div>
<div class="a" style="left:1543px;top:103px;width:144px;height:16px;background:#19232D;border:1px solid #455364;border-radius:3px;box-sizing:border-box;"></div>
<div class="a" style="left:1544px;top:103px;width:136px;height:16px;overflow:hidden;direction:ltr;"><div class="t" style="left:0px;padding-left:5px;top:4.53px;font-size:10px;line-height:10px;color:#E0E1E3;letter-spacing:-0.1px;">10</div></div>
<div class="a" style="left:1243px;top:124px;width:144px;height:16px;background:#19232D;border:1px solid #455364;border-radius:3px;box-sizing:border-box;"></div>
<div class="a" style="left:1244px;top:124px;width:136px;height:16px;overflow:hidden;direction:ltr;"><div class="t" style="left:0px;padding-left:5px;top:4.53px;font-size:10px;line-height:10px;color:#E0E1E3;letter-spacing:-0.1px;">-1000</div></div>
<div class="a" style="left:1392px;top:124px;width:146px;height:16px;background:#19232D;border:1px solid #455364;border-radius:3px;box-sizing:border-box;"></div>
<div class="a" style="left:1393px;top:124px;width:138px;height:16px;overflow:hidden;direction:ltr;"><div class="t" style="left:0px;padding-left:5px;top:4.53px;font-size:10px;line-height:10px;color:#E0E1E3;letter-spacing:-0.1px;">1000</div></div>
<div class="a" style="left:1543px;top:124px;width:144px;height:16px;background:#19232D;border:1px solid #455364;border-radius:3px;box-sizing:border-box;"></div>
<div class="a" style="left:1544px;top:124px;width:136px;height:16px;overflow:hidden;direction:ltr;"><div class="t" style="left:0px;padding-left:5px;top:4.53px;font-size:10px;line-height:10px;color:#E0E1E3;letter-spacing:-0.1px;">3219</div></div>
<div class="a" style="left:1243px;top:145px;width:144px;height:16px;background:#19232D;border:1px solid #455364;border-radius:3px;box-sizing:border-box;"></div>
<div class="a" style="left:1244px;top:145px;width:136px;height:16px;overflow:hidden;direction:ltr;"><div class="t" style="left:0px;padding-left:5px;top:4.53px;font-size:10px;line-height:10px;color:#E0E1E3;letter-spacing:-0.1px;">-1000</div></div>
<div class="a" style="left:1392px;top:145px;width:146px;height:16px;background:#19232D;border:1px solid #455364;border-radius:3px;box-sizing:border-box;"></div>
<div class="a" style="left:1393px;top:145px;width:138px;height:16px;overflow:hidden;direction:ltr;"><div class="t" style="left:0px;padding-left:5px;top:4.53px;font-size:10px;line-height:10px;color:#E0E1E3;letter-spacing:-0.1px;">1000</div></div>
<div class="a" style="left:1543px;top:145px;width:144px;height:16px;background:#19232D;border:1px solid #455364;border-radius:3px;box-sizing:border-box;"></div>
<div class="a" style="left:1544px;top:145px;width:136px;height:16px;overflow:hidden;direction:ltr;"><div class="t" style="left:0px;padding-left:5px;top:4.53px;font-size:10px;line-height:10px;color:#E0E1E3;letter-spacing:-0.1px;">2428</div></div>
<div class="a" style="left:1243px;top:171px;width:444px;height:6px;background:#455364;border-radius:2px;"></div>
<div class="a" style="left:1244px;top:166px;width:9px;height:16px;background:#a9b4be;border-radius:4px;"></div>
<div class="a" style="left:1243px;top:192px;width:444px;height:6px;background:#455364;border-radius:2px;"></div>
<div class="a" style="left:1244px;top:187px;width:9px;height:16px;background:#a9b4be;border-radius:4px;"></div>
<div class="a" style="left:1243px;top:213px;width:444px;height:6px;background:#455364;border-radius:2px;"></div>
<div class="a" style="left:1243px;top:213px;width:425px;height:6px;background:#346792;border-radius:2px 0 0 2px;"></div>
<div class="a" style="left:1664px;top:208px;width:9px;height:16px;background:#a9b4be;border-radius:4px;"></div>
<div class="a" style="left:1243px;top:230px;width:144px;height:16px;background:#19232D;border:1px solid #455364;border-radius:3px;box-sizing:border-box;"></div>
<div class="a" style="left:1244px;top:230px;width:136px;height:16px;overflow:hidden;direction:ltr;"><div class="t" style="left:0px;padding-left:5px;top:4.53px;font-size:10px;line-height:10px;color:#E0E1E3;letter-spacing:-0.1px;">MCT</div></div>
<div class="t" style="left:1396px;top:233.44px;font-size:10px;line-height:10px;color:#E0E1E3;font-weight:400;letter-spacing:-0.1px;">Number of images: 2 / 1000</div>
<div class="a" style="left:1545px;top:232px;width:11px;height:11px;border:1px solid #C9CDD0;border-radius:2px;box-sizing:border-box;"></div>
<div class="t" style="left:1560px;top:233.44px;font-size:10px;line-height:10px;color:#E0E1E3;font-weight:400;letter-spacing:-0.1px;">Perform Z-Stack</div>
<div class="a" style="left:1243px;top:251px;width:144px;height:16px;background:#19232D;border:1px solid #455364;border-radius:3px;box-sizing:border-box;"></div>
<div class="a" style="left:1244px;top:251px;width:136px;height:16px;overflow:hidden;direction:ltr;"><div class="t" style="left:0px;padding-left:5px;top:4.53px;font-size:10px;line-height:10px;color:#E0E1E3;letter-spacing:-0.1px;">200</div></div>
<div class="a" style="left:1392px;top:251px;width:146px;height:16px;background:#19232D;border:1px solid #455364;border-radius:3px;box-sizing:border-box;"></div>
<div class="a" style="left:1393px;top:251px;width:138px;height:16px;overflow:hidden;direction:ltr;"><div class="t" style="left:0px;padding-left:5px;top:4.53px;font-size:10px;line-height:10px;color:#E0E1E3;letter-spacing:-0.1px;">20</div></div>
<div class="a" style="left:1543px;top:251px;width:144px;height:16px;background:#19232D;border:1px solid #455364;border-radius:3px;box-sizing:border-box;"></div>
<div class="a" style="left:1544px;top:251px;width:136px;height:16px;overflow:hidden;direction:ltr;"><div class="t" style="left:0px;padding-left:5px;top:4.53px;font-size:10px;line-height:10px;color:#E0E1E3;letter-spacing:-0.1px;">10</div></div>
<div class="a" style="left:1245px;top:273px;width:11px;height:11px;border:1px solid #C9CDD0;border-radius:2px;box-sizing:border-box;"></div>
<div class="t" style="left:1260px;top:275.44px;font-size:10px;line-height:10px;color:#E0E1E3;font-weight:400;letter-spacing:-0.1px;">Laser 1</div>
<div class="a" style="left:1395px;top:273px;width:11px;height:11px;border:1px solid #C9CDD0;border-radius:2px;box-sizing:border-box;"></div>
<div class="t" style="left:1410px;top:275.44px;font-size:10px;line-height:10px;color:#E0E1E3;font-weight:400;letter-spacing:-0.1px;">Laser 2</div>
<div class="a" style="left:1545px;top:273px;width:11px;height:11px;border:1px solid #C9CDD0;border-radius:2px;box-sizing:border-box;"></div>
<div class="t" style="left:1560px;top:275.44px;font-size:10px;line-height:10px;color:#E0E1E3;font-weight:400;letter-spacing:-0.1px;">LED 1</div>
<div class="a" style="left:1003px;top:293px;width:235px;height:15px;background:#455364;border-radius:3px;"></div>
<div class="t" style="left:1003px;width:235px;text-align:center;top:295.54px;font-size:10px;line-height:10px;color:#788D9C;font-weight:400;letter-spacing:-0.1px;">Start</div>
<div class="a" style="left:1243px;top:293px;width:144px;height:15px;background:#455364;border-radius:3px;"></div>
<div class="t" style="left:1243px;width:144px;text-align:center;top:295.54px;font-size:10px;line-height:10px;color:#E0E1E3;font-weight:400;letter-spacing:-0.1px;">Stop</div>
<div class="a" style="left:1392px;top:293px;width:145px;height:15px;background:#455364;border-radius:3px;"></div>
<div class="t" style="left:1392px;width:145px;text-align:center;top:295.54px;font-size:10px;line-height:10px;color:#788D9C;font-weight:400;letter-spacing:-0.1px;">Show Last</div>
<div class="a" style="left:1545px;top:293px;width:11px;height:11px;border:1px solid #C9CDD0;border-radius:2px;box-sizing:border-box;"></div>
<div class="t" style="left:1560px;top:295.54px;font-size:10px;line-height:10px;color:#E0E1E3;font-weight:400;letter-spacing:-0.1px;">Perform XY Scan</div>
<div class="a" style="left:993px;top:326px;width:352px;height:13px;background:#6963CC;border-radius:1px 1px 0 0;"></div>
<div class="a" style="left:1347px;top:326px;width:350px;height:13px;background:#4643AE;border-radius:1px 1px 0 0;"></div>
<div class="t" style="left:993px;width:352px;text-align:center;top:327.69px;font-size:11px;line-height:11px;color:#E0E1E3;font-weight:400;letter-spacing:-0.2px;">Laser Control</div>
<div class="t" style="left:1347px;width:350px;text-align:center;top:327.69px;font-size:11px;line-height:11px;color:#aaa6dc;font-weight:400;letter-spacing:-0.2px;">PixelCalibration</div>
<div class="a" style="left:993px;top:339px;width:702px;height:244px;background:#19232D;border:1px solid #0d1318;border-top:none;box-sizing:border-box;border-radius:0 0 4px 4px;"></div>
<div class="a" style="left:1003px;top:349px;width:684px;height:234px;border:1px solid #455364;border-bottom:none;border-radius:4px 4px 0 0;box-sizing:border-box;"></div>
<div class="a" style="left:1010px;top:355px;width:4px;height:74px;background:#1ec8d8;border-radius:2px;"></div>
<div class="t" style="left:1028px;top:385.30px;font-size:15px;line-height:15px;color:#E0E1E3;font-weight:700;letter-spacing:0;">488 Laser</div>
<div class="a" style="left:1113px;top:355px;width:538px;height:74px;border:1px solid #455364;border-radius:4px;box-sizing:border-box;"></div>
<div class="t" style="left:1123px;top:389.54px;font-size:10px;line-height:10px;color:#E0E1E3;font-weight:400;letter-spacing:-0.1px;">Setpoint [mW]</div>
<div class="a" style="left:1192px;top:382.0px;width:45px;height:20.0px;background:#19232D;border:1px solid #455364;border-radius:3px;box-sizing:border-box;"></div>
<div class="a" style="left:1193px;top:382.0px;width:36px;height:20.0px;overflow:hidden;direction:ltr;"><div class="t" style="right:0px;padding-left:6px;top:7.11px;font-size:10.5px;line-height:10.5px;color:#E0E1E3;letter-spacing:-0.2px;">0</div></div>
<div class="t" style="left:1247px;top:389.11px;font-size:10.5px;line-height:10.5px;color:#E0E1E3;font-weight:400;letter-spacing:-0.2px;">0</div>
<div class="a" style="left:1263px;top:389.0px;width:344px;height:6.0px;background:#455364;border-radius:2px;"></div>
<div class="a" style="left:1263px;top:384.0px;width:9px;height:16.0px;background:#a9b4be;border-radius:4px;"></div>
<div class="t" style="left:1617px;top:389.11px;font-size:10.5px;line-height:10.5px;color:#E0E1E3;font-weight:400;letter-spacing:-0.2px;">1024</div>
<div class="a" style="left:1657px;top:356px;width:24px;height:73px;background:#455364;border-radius:4px;"></div>
<div class="t" style="left:1657px;width:24px;text-align:center;top:389.11px;font-size:10.5px;line-height:10.5px;color:#E0E1E3;font-weight:400;letter-spacing:-0.2px;">ON</div>
<div class="a" style="left:1010px;top:435px;width:4px;height:72px;background:#e01010;border-radius:2px;"></div>
<div class="t" style="left:1028px;top:464.30px;font-size:15px;line-height:15px;color:#E0E1E3;font-weight:700;letter-spacing:0;">635 Laser</div>
<div class="a" style="left:1113px;top:435px;width:538px;height:72px;border:1px solid #455364;border-radius:4px;box-sizing:border-box;"></div>
<div class="t" style="left:1123px;top:468.54px;font-size:10px;line-height:10px;color:#E0E1E3;font-weight:400;letter-spacing:-0.1px;">Setpoint [mW]</div>
<div class="a" style="left:1192px;top:461.0px;width:45px;height:20.0px;background:#19232D;border:1px solid #455364;border-radius:3px;box-sizing:border-box;"></div>
<div class="a" style="left:1193px;top:461.0px;width:36px;height:20.0px;overflow:hidden;direction:ltr;"><div class="t" style="right:0px;padding-left:6px;top:7.11px;font-size:10.5px;line-height:10.5px;color:#E0E1E3;letter-spacing:-0.2px;">0</div></div>
<div class="t" style="left:1247px;top:468.11px;font-size:10.5px;line-height:10.5px;color:#E0E1E3;font-weight:400;letter-spacing:-0.2px;">0</div>
<div class="a" style="left:1263px;top:468.0px;width:344px;height:6.0px;background:#455364;border-radius:2px;"></div>
<div class="a" style="left:1263px;top:463.0px;width:9px;height:16.0px;background:#a9b4be;border-radius:4px;"></div>
<div class="t" style="left:1617px;top:468.11px;font-size:10.5px;line-height:10.5px;color:#E0E1E3;font-weight:400;letter-spacing:-0.2px;">1024</div>
<div class="a" style="left:1657px;top:436px;width:24px;height:71px;background:#455364;border-radius:4px;"></div>
<div class="t" style="left:1657px;width:24px;text-align:center;top:468.11px;font-size:10.5px;line-height:10.5px;color:#E0E1E3;font-weight:400;letter-spacing:-0.2px;">ON</div>
<div class="a" style="left:1010px;top:513px;width:4px;height:70px;background:#e01010;border-radius:2px;"></div>
<div class="t" style="left:1028px;top:543.30px;font-size:15px;line-height:15px;color:#E0E1E3;font-weight:700;letter-spacing:0;">LED</div>
<div class="a" style="left:1113px;top:513px;width:538px;height:70px;border:1px solid #455364;border-radius:4px;box-sizing:border-box;"></div>
<div class="t" style="left:1123px;top:547.53px;font-size:10px;line-height:10px;color:#E0E1E3;font-weight:400;letter-spacing:-0.1px;">Setpoint [mW]</div>
<div class="a" style="left:1192px;top:540px;width:45px;height:20px;background:#19232D;border:1px solid #455364;border-radius:3px;box-sizing:border-box;"></div>
<div class="a" style="left:1193px;top:540px;width:36px;height:20px;overflow:hidden;direction:ltr;"><div class="t" style="right:0px;padding-left:6px;top:7.11px;font-size:10.5px;line-height:10.5px;color:#E0E1E3;letter-spacing:-0.2px;">0</div></div>
<div class="t" style="left:1247px;top:547.11px;font-size:10.5px;line-height:10.5px;color:#E0E1E3;font-weight:400;letter-spacing:-0.2px;">0</div>
<div class="a" style="left:1263px;top:547px;width:349px;height:6px;background:#455364;border-radius:2px;"></div>
<div class="a" style="left:1263px;top:542px;width:9px;height:16px;background:#a9b4be;border-radius:4px;"></div>
<div class="t" style="left:1621px;top:547.11px;font-size:10.5px;line-height:10.5px;color:#E0E1E3;font-weight:400;letter-spacing:-0.2px;">255</div>
<div class="a" style="left:1657px;top:514px;width:24px;height:69px;background:#455364;border-radius:4px;"></div>
<div class="t" style="left:1657px;width:24px;text-align:center;top:547.11px;font-size:10.5px;line-height:10.5px;color:#E0E1E3;font-weight:400;letter-spacing:-0.2px;">ON</div>
<div class="a" style="left:993px;top:594px;width:704px;height:85px;background:#19232D;border:1px solid #0d1318;box-sizing:border-box;border-radius:4px;"></div>
<div class="a" style="left:993px;top:594px;width:12px;height:85px;background:#6963CC;border-radius:3px 0 0 3px;"></div>
<div class="t" style="left:956.5px;top:630.5px;width:85px;height:12px;line-height:12px;text-align:center;font-size:11px;color:#E0E1E3;transform:rotate(-90deg) scaleX(1.0);">Positioner</div>
<div class="t" style="left:1017px;top:605.61px;font-size:10.5px;line-height:10.5px;color:#E0E1E3;font-weight:700;letter-spacing:-0.2px;">ESP32Stage -- X</div>
<div class="t" style="left:1111px;top:605.61px;font-size:10.5px;line-height:10.5px;color:#E0E1E3;font-weight:700;letter-spacing:-0.2px;">0.00 µm</div>
<div class="a" style="left:1174px;top:604.5px;width:21px;height:15.0px;background:#455364;border-radius:3px;"></div>
<div class="t" style="left:1174px;width:21px;text-align:center;top:605.19px;font-size:11px;line-height:11px;color:#E0E1E3;font-weight:400;letter-spacing:-0.2px;">+</div>
<div class="a" style="left:1200px;top:604.5px;width:22px;height:15.0px;background:#455364;border-radius:3px;"></div>
<div class="t" style="left:1200px;width:22px;text-align:center;top:605.19px;font-size:11px;line-height:11px;color:#E0E1E3;font-weight:400;letter-spacing:-0.2px;">-</div>
<div class="t" style="left:1230px;top:606.11px;font-size:10.5px;line-height:10.5px;color:#E0E1E3;font-weight:400;letter-spacing:-0.2px;">Rel</div>
<div class="a" style="left:1255px;top:602.5px;width:36px;height:18.5px;background:#19232D;border:1px solid #455364;border-radius:3px;box-sizing:border-box;"></div>
<div class="a" style="left:1256px;top:602.5px;width:28px;height:18.5px;overflow:hidden;direction:ltr;"><div class="t" style="left:0px;padding-left:5px;top:4.31px;font-size:10.5px;line-height:10.5px;color:#E0E1E3;letter-spacing:-0.2px;">1000</div></div>
<div class="t" style="left:1300px;top:606.11px;font-size:10.5px;line-height:10.5px;color:#E0E1E3;font-weight:400;letter-spacing:-0.2px;">Abs</div>
<div class="a" style="left:1327px;top:602.5px;width:36px;height:18.5px;background:#19232D;border:1px solid #455364;border-radius:3px;box-sizing:border-box;"></div>
<div class="a" style="left:1328px;top:602.5px;width:28px;height:18.5px;overflow:hidden;direction:ltr;"><div class="t" style="left:0px;padding-left:5px;top:4.31px;font-size:10.5px;line-height:10.5px;color:#E0E1E3;letter-spacing:-0.2px;">0</div></div>
<div class="a" style="left:1368px;top:604.5px;width:26px;height:15.0px;background:#455364;border-radius:3px;"></div>
<div class="t" style="left:1368px;width:26px;text-align:center;top:606.11px;font-size:10.5px;line-height:10.5px;color:#E0E1E3;font-weight:400;letter-spacing:-0.2px;">Go!</div>
<div class="t" style="left:1403px;top:605.61px;font-size:10.5px;line-height:10.5px;color:#E0E1E3;font-weight:400;letter-spacing:-0.2px;">Speed:</div>
<div class="a" style="left:1444px;top:602.5px;width:37px;height:18.5px;background:#19232D;border:1px solid #455364;border-radius:3px;box-sizing:border-box;"></div>
<div class="a" style="left:1445px;top:602.5px;width:29px;height:18.5px;overflow:hidden;direction:ltr;"><div class="t" style="left:0px;padding-left:5px;top:4.31px;font-size:10.5px;line-height:10.5px;color:#E0E1E3;letter-spacing:-0.2px;">1000</div></div>
<div class="a" style="left:1486px;top:604.5px;width:101px;height:15.0px;background:#455364;border-radius:3px;"></div>
<div class="t" style="left:1486px;width:101px;text-align:center;top:606.96px;font-size:9.5px;line-height:9.5px;color:#E0E1E3;font-weight:400;letter-spacing:-0.1px;">Home ESP32Stage--X</div>
<div class="a" style="left:1592px;top:604.5px;width:97px;height:15.0px;background:#455364;border-radius:3px;"></div>
<div class="t" style="left:1592px;width:97px;text-align:center;top:606.96px;font-size:9.5px;line-height:9.5px;color:#E0E1E3;font-weight:400;letter-spacing:-0.1px;">Stop ESP32Stage--X</div>
<div class="t" style="left:1017px;top:630.61px;font-size:10.5px;line-height:10.5px;color:#E0E1E3;font-weight:700;letter-spacing:-0.2px;">ESP32Stage -- Y</div>
<div class="t" style="left:1111px;top:630.61px;font-size:10.5px;line-height:10.5px;color:#E0E1E3;font-weight:700;letter-spacing:-0.2px;">0.00 µm</div>
<div class="a" style="left:1174px;top:629.5px;width:21px;height:15.0px;background:#455364;border-radius:3px;"></div>
<div class="t" style="left:1174px;width:21px;text-align:center;top:630.19px;font-size:11px;line-height:11px;color:#E0E1E3;font-weight:400;letter-spacing:-0.2px;">+</div>
<div class="a" style="left:1200px;top:629.5px;width:22px;height:15.0px;background:#455364;border-radius:3px;"></div>
<div class="t" style="left:1200px;width:22px;text-align:center;top:630.19px;font-size:11px;line-height:11px;color:#E0E1E3;font-weight:400;letter-spacing:-0.2px;">-</div>
<div class="t" style="left:1230px;top:631.11px;font-size:10.5px;line-height:10.5px;color:#E0E1E3;font-weight:400;letter-spacing:-0.2px;">Rel</div>
<div class="a" style="left:1255px;top:627.5px;width:36px;height:18.5px;background:#19232D;border:1px solid #455364;border-radius:3px;box-sizing:border-box;"></div>
<div class="a" style="left:1256px;top:627.5px;width:28px;height:18.5px;overflow:hidden;direction:ltr;"><div class="t" style="left:0px;padding-left:5px;top:4.31px;font-size:10.5px;line-height:10.5px;color:#E0E1E3;letter-spacing:-0.2px;">1000</div></div>
<div class="t" style="left:1300px;top:631.11px;font-size:10.5px;line-height:10.5px;color:#E0E1E3;font-weight:400;letter-spacing:-0.2px;">Abs</div>
<div class="a" style="left:1327px;top:627.5px;width:36px;height:18.5px;background:#19232D;border:1px solid #455364;border-radius:3px;box-sizing:border-box;"></div>
<div class="a" style="left:1328px;top:627.5px;width:28px;height:18.5px;overflow:hidden;direction:ltr;"><div class="t" style="left:0px;padding-left:5px;top:4.31px;font-size:10.5px;line-height:10.5px;color:#E0E1E3;letter-spacing:-0.2px;">0</div></div>
<div class="a" style="left:1368px;top:629.5px;width:26px;height:15.0px;background:#455364;border-radius:3px;"></div>
<div class="t" style="left:1368px;width:26px;text-align:center;top:631.11px;font-size:10.5px;line-height:10.5px;color:#E0E1E3;font-weight:400;letter-spacing:-0.2px;">Go!</div>
<div class="t" style="left:1403px;top:630.61px;font-size:10.5px;line-height:10.5px;color:#E0E1E3;font-weight:400;letter-spacing:-0.2px;">Speed:</div>
<div class="a" style="left:1444px;top:627.5px;width:37px;height:18.5px;background:#19232D;border:1px solid #455364;border-radius:3px;box-sizing:border-box;"></div>
<div class="a" style="left:1445px;top:627.5px;width:29px;height:18.5px;overflow:hidden;direction:ltr;"><div class="t" style="left:0px;padding-left:5px;top:4.31px;font-size:10.5px;line-height:10.5px;color:#E0E1E3;letter-spacing:-0.2px;">1000</div></div>
<div class="a" style="left:1486px;top:629.5px;width:101px;height:15.0px;background:#455364;border-radius:3px;"></div>
<div class="t" style="left:1486px;width:101px;text-align:center;top:631.96px;font-size:9.5px;line-height:9.5px;color:#E0E1E3;font-weight:400;letter-spacing:-0.1px;">Home ESP32Stage--Y</div>
<div class="a" style="left:1592px;top:629.5px;width:97px;height:15.0px;background:#455364;border-radius:3px;"></div>
<div class="t" style="left:1592px;width:97px;text-align:center;top:631.96px;font-size:9.5px;line-height:9.5px;color:#E0E1E3;font-weight:400;letter-spacing:-0.1px;">Stop ESP32Stage--Y</div>
<div class="t" style="left:1017px;top:655.81px;font-size:10.5px;line-height:10.5px;color:#E0E1E3;font-weight:700;letter-spacing:-0.2px;">ESP32Stage -- Z</div>
<div class="t" style="left:1111px;top:655.81px;font-size:10.5px;line-height:10.5px;color:#E0E1E3;font-weight:700;letter-spacing:-0.2px;">851.00 µm</div>
<div class="a" style="left:1174px;top:654.7px;width:21px;height:15.0px;background:#455364;border-radius:3px;"></div>
<div class="t" style="left:1174px;width:21px;text-align:center;top:655.39px;font-size:11px;line-height:11px;color:#E0E1E3;font-weight:400;letter-spacing:-0.2px;">+</div>
<div class="a" style="left:1200px;top:654.7px;width:22px;height:15.0px;background:#455364;border-radius:3px;"></div>
<div class="t" style="left:1200px;width:22px;text-align:center;top:655.39px;font-size:11px;line-height:11px;color:#E0E1E3;font-weight:400;letter-spacing:-0.2px;">-</div>
<div class="t" style="left:1230px;top:656.31px;font-size:10.5px;line-height:10.5px;color:#E0E1E3;font-weight:400;letter-spacing:-0.2px;">Rel</div>
<div class="a" style="left:1255px;top:652.7px;width:36px;height:18.5px;background:#19232D;border:1px solid #455364;border-radius:3px;box-sizing:border-box;"></div>
<div class="a" style="left:1256px;top:652.7px;width:28px;height:18.5px;overflow:hidden;direction:ltr;"><div class="t" style="left:0px;padding-left:5px;top:4.31px;font-size:10.5px;line-height:10.5px;color:#E0E1E3;letter-spacing:-0.2px;">2</div></div>
<div class="t" style="left:1300px;top:656.31px;font-size:10.5px;line-height:10.5px;color:#E0E1E3;font-weight:400;letter-spacing:-0.2px;">Abs</div>
<div class="a" style="left:1327px;top:652.7px;width:36px;height:18.5px;background:#19232D;border:1px solid #455364;border-radius:3px;box-sizing:border-box;"></div>
<div class="a" style="left:1328px;top:652.7px;width:28px;height:18.5px;overflow:hidden;direction:ltr;"><div class="t" style="left:0px;padding-left:5px;top:4.31px;font-size:10.5px;line-height:10.5px;color:#E0E1E3;letter-spacing:-0.2px;">0</div></div>
<div class="a" style="left:1368px;top:654.7px;width:26px;height:15.0px;background:#455364;border-radius:3px;"></div>
<div class="t" style="left:1368px;width:26px;text-align:center;top:656.31px;font-size:10.5px;line-height:10.5px;color:#E0E1E3;font-weight:400;letter-spacing:-0.2px;">Go!</div>
<div class="t" style="left:1403px;top:655.81px;font-size:10.5px;line-height:10.5px;color:#E0E1E3;font-weight:400;letter-spacing:-0.2px;">Speed:</div>
<div class="a" style="left:1444px;top:652.7px;width:37px;height:18.5px;background:#19232D;border:1px solid #455364;border-radius:3px;box-sizing:border-box;"></div>
<div class="a" style="left:1445px;top:652.7px;width:29px;height:18.5px;overflow:hidden;direction:ltr;"><div class="t" style="left:0px;padding-left:5px;top:4.31px;font-size:10.5px;line-height:10.5px;color:#E0E1E3;letter-spacing:-0.2px;">1000</div></div>
<div class="a" style="left:1486px;top:654.7px;width:101px;height:15.0px;background:#455364;border-radius:3px;"></div>
<div class="t" style="left:1486px;width:101px;text-align:center;top:657.16px;font-size:9.5px;line-height:9.5px;color:#E0E1E3;font-weight:400;letter-spacing:-0.1px;">Home ESP32Stage--Z</div>
<div class="a" style="left:1592px;top:654.7px;width:97px;height:15.0px;background:#455364;border-radius:3px;"></div>
<div class="t" style="left:1592px;width:97px;text-align:center;top:657.16px;font-size:9.5px;line-height:9.5px;color:#E0E1E3;font-weight:400;letter-spacing:-0.1px;">Stop ESP32Stage--Z</div>
<div class="a" style="left:993px;top:687px;width:233px;height:13px;background:#6963CC;border-radius:1px 1px 0 0;"></div>
<div class="a" style="left:1228px;top:687px;width:234px;height:13px;background:#4643AE;border-radius:1px 1px 0 0;"></div>
<div class="a" style="left:1464px;top:687px;width:233px;height:13px;background:#4643AE;border-radius:1px 1px 0 0;"></div>
<div class="t" style="left:993px;width:233px;text-align:center;top:688.69px;font-size:11px;line-height:11px;color:#E0E1E3;font-weight:400;letter-spacing:-0.2px;">LEDMatrix Tool</div>
<div class="t" style="left:1228px;width:234px;text-align:center;top:688.69px;font-size:11px;line-height:11px;color:#aaa6dc;font-weight:400;letter-spacing:-0.2px;">STORM Recon Tool</div>
<div class="t" style="left:1464px;width:233px;text-align:center;top:688.69px;font-size:11px;line-height:11px;color:#aaa6dc;font-weight:400;letter-spacing:-0.2px;">Scan</div>
<div class="a" style="left:995px;top:700px;width:700px;height:179px;background:#19232D;border:1px solid #0d1318;border-top:none;box-sizing:border-box;border-radius:0 0 4px 4px;"></div>
<div class="a" style="left:1003px;top:710px;width:71px;height:30px;background:#808080;border-radius:4px;"></div>
<div class="t" style="left:1003px;width:71px;text-align:center;top:718.19px;font-size:14px;line-height:14px;color:#F0F0F0;font-weight:400;letter-spacing:0;">0</div>
<div class="a" style="left:1080px;top:710px;width:71px;height:30px;background:#808080;border-radius:4px;"></div>
<div class="t" style="left:1080px;width:71px;text-align:center;top:718.19px;font-size:14px;line-height:14px;color:#F0F0F0;font-weight:400;letter-spacing:0;">1</div>
<div class="a" style="left:1156px;top:710px;width:71px;height:30px;background:#808080;border-radius:4px;"></div>
<div class="t" style="left:1156px;width:71px;text-align:center;top:718.19px;font-size:14px;line-height:14px;color:#F0F0F0;font-weight:400;letter-spacing:0;">2</div>
<div class="a" style="left:1233px;top:710px;width:71px;height:30px;background:#808080;border-radius:4px;"></div>
<div class="t" style="left:1233px;width:71px;text-align:center;top:718.19px;font-size:14px;line-height:14px;color:#F0F0F0;font-weight:400;letter-spacing:0;">3</div>
<div class="a" style="left:1003px;top:746px;width:71px;height:30px;background:#808080;border-radius:4px;"></div>
<div class="t" style="left:1003px;width:71px;text-align:center;top:754.19px;font-size:14px;line-height:14px;color:#F0F0F0;font-weight:400;letter-spacing:0;">4</div>
<div class="a" style="left:1080px;top:746px;width:71px;height:30px;background:#808080;border-radius:4px;"></div>
<div class="t" style="left:1080px;width:71px;text-align:center;top:754.19px;font-size:14px;line-height:14px;color:#F0F0F0;font-weight:400;letter-spacing:0;">5</div>
<div class="a" style="left:1156px;top:746px;width:71px;height:30px;background:#808080;border-radius:4px;"></div>
<div class="t" style="left:1156px;width:71px;text-align:center;top:754.19px;font-size:14px;line-height:14px;color:#F0F0F0;font-weight:400;letter-spacing:0;">6</div>
<div class="a" style="left:1233px;top:746px;width:71px;height:30px;background:#808080;border-radius:4px;"></div>
<div class="t" style="left:1233px;width:71px;text-align:center;top:754.19px;font-size:14px;line-height:14px;color:#F0F0F0;font-weight:400;letter-spacing:0;">7</div>
<div class="a" style="left:1003px;top:781px;width:71px;height:30px;background:#808080;border-radius:4px;"></div>
<div class="t" style="left:1003px;width:71px;text-align:center;top:789.19px;font-size:14px;line-height:14px;color:#F0F0F0;font-weight:400;letter-spacing:0;">8</div>
<div class="a" style="left:1080px;top:781px;width:71px;height:30px;background:#808080;border-radius:4px;"></div>
<div class="t" style="left:1080px;width:71px;text-align:center;top:789.19px;font-size:14px;line-height:14px;color:#F0F0F0;font-weight:400;letter-spacing:0;">9</div>
<div class="a" style="left:1156px;top:781px;width:71px;height:30px;background:#808080;border-radius:4px;"></div>
<div class="t" style="left:1156px;width:71px;text-align:center;top:789.19px;font-size:14px;line-height:14px;color:#F0F0F0;font-weight:400;letter-spacing:0;">10</div>
<div class="a" style="left:1233px;top:781px;width:71px;height:30px;background:#808080;border-radius:4px;"></div>
<div class="t" style="left:1233px;width:71px;text-align:center;top:789.19px;font-size:14px;line-height:14px;color:#F0F0F0;font-weight:400;letter-spacing:0;">11</div>
<div class="a" style="left:1003px;top:817px;width:71px;height:30px;background:#808080;border-radius:4px;"></div>
<div class="t" style="left:1003px;width:71px;text-align:center;top:825.19px;font-size:14px;line-height:14px;color:#F0F0F0;font-weight:400;letter-spacing:0;">12</div>
<div class="a" style="left:1080px;top:817px;width:71px;height:30px;background:#808080;border-radius:4px;"></div>
<div class="t" style="left:1080px;width:71px;text-align:center;top:825.19px;font-size:14px;line-height:14px;color:#F0F0F0;font-weight:400;letter-spacing:0;">13</div>
<div class="a" style="left:1156px;top:817px;width:71px;height:30px;background:#808080;border-radius:4px;"></div>
<div class="t" style="left:1156px;width:71px;text-align:center;top:825.19px;font-size:14px;line-height:14px;color:#F0F0F0;font-weight:400;letter-spacing:0;">14</div>
<div class="a" style="left:1233px;top:817px;width:71px;height:30px;background:#808080;border-radius:4px;"></div>
<div class="t" style="left:1233px;width:71px;text-align:center;top:825.19px;font-size:14px;line-height:14px;color:#F0F0F0;font-weight:400;letter-spacing:0;">15</div>
<div class="a" style="left:1616px;top:717px;width:71px;height:15px;background:#455364;border-radius:4px;"></div>
<div class="t" style="left:1616px;width:71px;text-align:center;top:720.53px;font-size:10px;line-height:10px;color:#E0E1E3;font-weight:400;letter-spacing:-0.1px;">All On</div>
<div class="a" style="left:1616px;top:753px;width:71px;height:15px;background:#455364;border-radius:4px;"></div>
<div class="t" style="left:1616px;width:71px;text-align:center;top:756.53px;font-size:10px;line-height:10px;color:#E0E1E3;font-weight:400;letter-spacing:-0.1px;">All Off</div>
<div class="a" style="left:1004px;top:859px;width:606px;height:6px;background:#455364;border-radius:2px;"></div>
<div class="a" style="left:1004px;top:854px;width:9px;height:16px;background:#a9b4be;border-radius:4px;"></div>
</body></html>
